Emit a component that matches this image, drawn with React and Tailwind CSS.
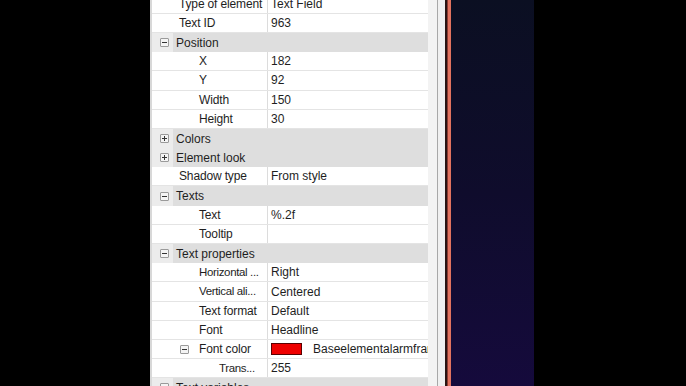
import React from "react";

const rows = [
  { kind: "prop", level: 1, label: "Type of element", value: "Text Field" },
  { kind: "prop", level: 1, label: "Text ID", value: "963" },
  { kind: "group", label: "Position", open: true },
  { kind: "prop", level: 2, label: "X", value: "182" },
  { kind: "prop", level: 2, label: "Y", value: "92" },
  { kind: "prop", level: 2, label: "Width", value: "150" },
  { kind: "prop", level: 2, label: "Height", value: "30" },
  { kind: "group", label: "Colors", open: false },
  { kind: "group", label: "Element look", open: false },
  { kind: "prop", level: 1, label: "Shadow type", value: "From style" },
  { kind: "group", label: "Texts", open: true },
  { kind: "prop", level: 2, label: "Text", value: "%.2f" },
  { kind: "prop", level: 2, label: "Tooltip", value: "" },
  { kind: "group", label: "Text properties", open: true },
  { kind: "prop", level: 2, label: "Horizontal ...", value: "Right", tight: true },
  { kind: "prop", level: 2, label: "Vertical ali...", value: "Centered", tight: true },
  { kind: "prop", level: 2, label: "Text format", value: "Default" },
  { kind: "prop", level: 2, label: "Font", value: "Headline" },
  { kind: "color", level: 2, label: "Font color", value: "Baseelementalarmframe" },
  { kind: "prop", level: 3, label: "Trans...", value: "255", tight: true },
  { kind: "group", label: "Text variables", open: true },
];

const indent = { 1: "pl-[27px]", 2: "pl-[47px]", 3: "pl-[67px]" };

function Toggle({ open }) {
  return (
    <span className="flex h-[9px] w-[9px] items-center justify-center rounded-[1px] border border-[#9a9a9a] bg-[#f4f4f4]">
      <span className="relative block h-[1px] w-[5px] bg-[#333]">
        {!open && (
          <span className="absolute left-[2px] top-[-2px] block h-[5px] w-[1px] bg-[#333]" />
        )}
      </span>
    </span>
  );
}

function Row({ row }) {
  if (row.kind === "group") {
    return (
      <div className="flex h-[19.2px] shrink-0 items-center bg-[#dedede]">
        <div className="flex h-full w-[21px] items-center bg-[#ececec] pl-[8px]">
          <Toggle open={row.open} />
        </div>
        <span className="pl-[3px]">{row.label}</span>
      </div>
    );
  }
  return (
    <div className="flex h-[19.2px] shrink-0 border-b border-[#e4e4e4] bg-white">
      <div className={`relative flex w-[116px] items-center overflow-hidden whitespace-nowrap border-r border-[#dcdcdc] ${indent[row.level]}`}>
        {row.kind === "color" && (
          <span className="absolute left-[28px] top-[5px]">
            <Toggle open />
          </span>
        )}
        <span className={row.tight ? "text-[11.5px] tracking-[-0.35px]" : "tracking-[-0.15px]"}>{row.label}</span>
      </div>
      <div className="flex min-w-0 flex-1 items-center overflow-hidden whitespace-nowrap pl-[3px]">
        {row.kind === "color" ? (
          <>
            <span className="h-[12px] w-[31px] shrink-0 border border-[#5a0000] bg-[#ee0000]" />
            <span className="pl-[11px]">{row.value}</span>
          </>
        ) : (
          row.value
        )}
      </div>
    </div>
  );
}

export default function App() {
  return (
    <main className="flex h-[386px] w-[686px] overflow-hidden bg-black font-['Liberation_Sans',Arial,sans-serif] text-[12px] text-[#1e1e1e]">
      <div className="w-[150px] shrink-0 bg-black" />
      <div className="flex w-[278px] shrink-0 flex-col border-l-2 border-[#d8d8d8] bg-white">
        <div className="-mt-[5.4px] flex flex-col">
          {rows.map((row, i) => (
            <Row key={i} row={row} />
          ))}
        </div>
      </div>
      <div className="w-[9px] shrink-0 bg-[#f3f3f3]" />
      <div className="w-[1px] shrink-0 bg-[#a8a8a8]" />
      <div className="w-[7px] shrink-0 bg-[#f0f0f0]" />
      <div className="w-[2px] shrink-0 bg-[#2a1412]" />
      <div className="w-[1px] shrink-0 bg-[#8a3a30]" />
      <div className="w-[3px] shrink-0 bg-[#e2735f]" />
      <div className="w-[83px] shrink-0 bg-gradient-to-b from-[#0b0f22] via-[#0f0c2c] to-[#150a3c]" />
      <div className="flex-1 bg-black" />
    </main>
  );
}
